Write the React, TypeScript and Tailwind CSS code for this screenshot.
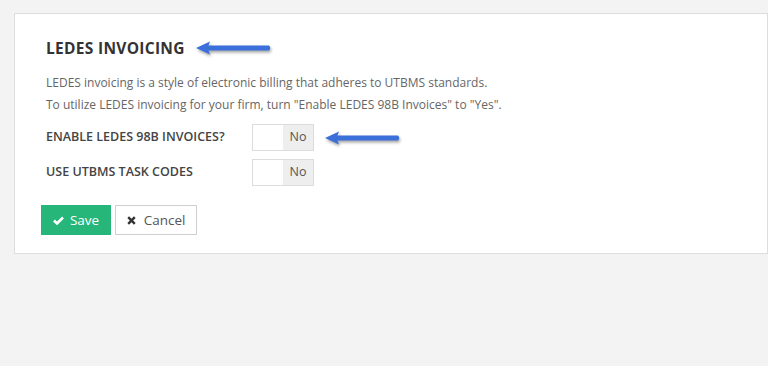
import * as React from "react";

function Arrow({ className }: { className?: string }) {
  // blue annotation arrow pointing left
  return (
    <svg
      className={className}
      width="80"
      height="20"
      viewBox="0 0 80 20"
      style={{ filter: "drop-shadow(1px 2px 1.5px rgba(0,0,0,0.35))" }}
    >
      <path d="M12 7.6 L74 7.6 Q76.5 10 74 12.4 L12 12.4 Z" fill="#3b6fd9" />
      <path d="M1 10 L15 3.5 L12.5 10 L15 16.5 Z" fill="#3b6fd9" />
    </svg>
  );
}

function Toggle() {
  return (
    <div className="flex h-[27px] w-[62px] border border-[#dcdcdc] bg-white">
      <div className="w-[30px] bg-white" />
      <div className="flex flex-1 items-center justify-center bg-[#eeeeee] text-[12.5px] text-[#555]">
        No
      </div>
    </div>
  );
}

export default function App() {
  const rows = [
    { label: "ENABLE LEDES 98B INVOICES?", arrow: true },
    { label: "USE UTBMS TASK CODES", arrow: false },
  ];

  return (
    <div
      className="h-[366px] w-[768px] overflow-hidden bg-[#f3f3f3] pl-[14px] pt-[13px]"
      style={{ fontFamily: '"Open Sans", "Liberation Sans", sans-serif' }}
    >
      <div className="h-[241px] border border-[#dddddd] bg-white pl-[31px] pt-[24px]">
        <div className="flex items-center gap-[10px]">
          <h2 className="text-[15.5px] font-bold leading-[20px] tracking-[0.3px] text-[#333]">
            LEDES INVOICING
          </h2>
          <Arrow />
        </div>

        <div className="mt-[14px] text-[12px] leading-[22px] text-[#666]">
          <p>LEDES invoicing is a style of electronic billing that adheres to UTBMS standards.</p>
          <p>To utilize LEDES invoicing for your firm, turn "Enable LEDES 98B Invoices" to "Yes".</p>
        </div>

        <div className="mt-[8px] flex flex-col gap-[8px]">
          {rows.map((r) => (
            <div key={r.label} className="flex items-center">
              <div className="w-[206px] text-[12.5px] font-semibold text-[#444]">{r.label}</div>
              <Toggle />
              {r.arrow && <Arrow className="ml-[10px]" />}
            </div>
          ))}
        </div>

        <div className="-ml-[5px] mt-[19px] flex gap-[4px]">
          <button className="flex h-[30px] w-[70px] items-center justify-center gap-[6px] bg-[#27b67a] text-[13.5px] text-white">
            <svg width="11" height="9" viewBox="0 0 11 9">
              <path d="M1 4.5 L4 7.5 L10 1.5" stroke="white" strokeWidth="2.6" fill="none" />
            </svg>
            Save
          </button>
          <button className="flex h-[30px] w-[82px] items-center justify-center gap-[8px] border border-[#cfcfcf] bg-white text-[13.5px] text-[#555]">
            <svg width="9" height="9" viewBox="0 0 9 9">
              <path d="M1.2 1.2 L7.8 7.8 M7.8 1.2 L1.2 7.8" stroke="#333" strokeWidth="2.4" />
            </svg>
            Cancel
          </button>
        </div>
      </div>
    </div>
  );
}
